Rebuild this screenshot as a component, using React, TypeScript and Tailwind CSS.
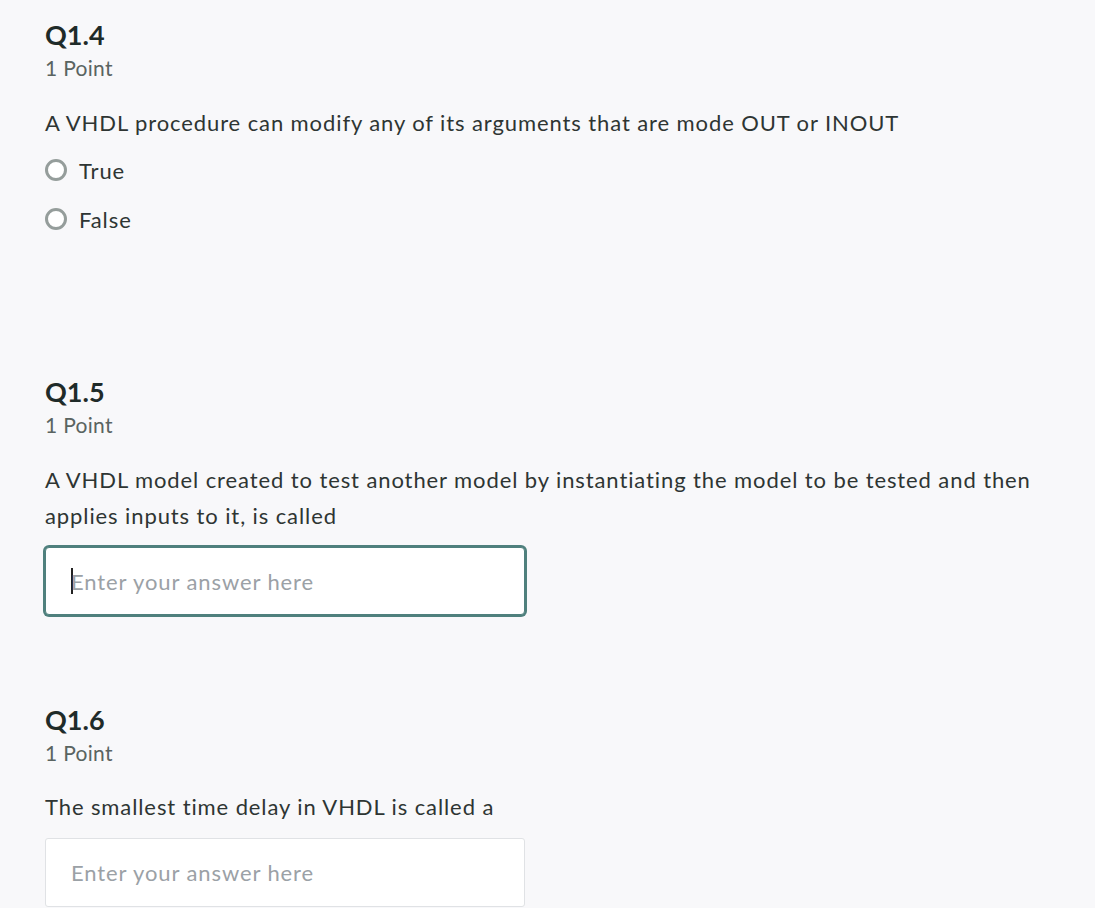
import React from "react";

const font = { fontFamily: "Lato, 'Open Sans', sans-serif" };

function Radio({ label }: { label: string }) {
  return (
    <label className="flex h-[36px] items-center gap-[12px] text-[22px] tracking-[0.9px] text-[#2e3533]">
      <span className="h-[22px] w-[22px] rounded-full border-[3px] border-[#959d9b] bg-white"></span>
      {label}
    </label>
  );
}

function Header({ num }: { num: string }) {
  return (
    <div>
      <h3 className="text-[27px] font-bold leading-[32px] text-[#1f2b29]">{num}</h3>
      <div className="mt-[1px] text-[21px] leading-[32px] tracking-[0.3px] text-[#5a6461]">1 Point</div>
    </div>
  );
}

function AnswerBox({ focused }: { focused?: boolean }) {
  return (
    <div
      className={
        focused
          ? "flex h-[68px] w-[480px] items-center rounded-[4px] border border-[#4f807d] bg-white px-[25px] ring-2 ring-[#4f807d]"
          : "flex h-[69px] w-[480px] items-center rounded-[3px] border border-[#e0e2e5] bg-white px-[25px]"
      }
    >
      {focused && <span className="mr-[-2px] h-[26px] w-[2px] bg-[#222]"></span>}
      <span className="text-[22px] tracking-[0.9px] text-[#9ba1a6]">Enter your answer here</span>
    </div>
  );
}

export default function App() {
  return (
    <div className="min-h-screen bg-[#f8f8fa] pl-[45px] pt-[19px]" style={font}>
      {/* Q1.4 */}
      <section>
        <Header num="Q1.4" />
        <p className="mt-[21px] text-[22px] leading-[36px] tracking-[0.9px] text-[#2e3533]">
          A VHDL procedure can modify any of its arguments that are mode OUT or INOUT
        </p>
        <div className="mt-[11px] flex flex-col gap-[13px]">
          <Radio label="True" />
          <Radio label="False" />
        </div>
      </section>

      {/* Q1.5 */}
      <section className="mt-[139px]">
        <Header num="Q1.5" />
        <p className="mt-[21px] text-[22px] leading-[36px] tracking-[0.9px] text-[#2e3533]">
          A VHDL model created to test another model by instantiating the model to be tested and then
          applies inputs to it, is called
        </p>
        <div className="mt-[13px]">
          <AnswerBox focused />
        </div>
      </section>

      {/* Q1.6 */}
      <section className="mt-[89px]">
        <Header num="Q1.6" />
        <p className="mt-[20px] text-[22px] leading-[36px] tracking-[0.9px] text-[#2e3533]">
          The smallest time delay in VHDL is called a
        </p>
        <div className="mt-[13px]">
          <AnswerBox />
        </div>
      </section>
    </div>
  );
}
